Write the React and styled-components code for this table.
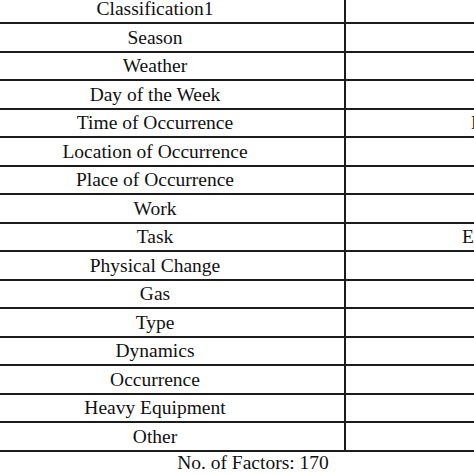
import styled, { createGlobalStyle } from 'styled-components';

const GlobalStyle = createGlobalStyle`
  html, body {
    margin: 0;
    padding: 0;
    background: #fff;
    overflow: hidden;
  }
`;

const rows = [
  { name: 'Classification1', value: '' },
  { name: 'Season', value: '' },
  { name: 'Weather', value: '' },
  { name: 'Day of the Week', value: '' },
  { name: 'Time of Occurrence', value: 'Daytime', indent: 125 },
  { name: 'Location of Occurrence', value: '' },
  { name: 'Place of Occurrence', value: '' },
  { name: 'Work', value: '' },
  { name: 'Task', value: 'Excavation', indent: 116 },
  { name: 'Physical Change', value: '' },
  { name: 'Gas', value: '' },
  { name: 'Type', value: '' },
  { name: 'Dynamics', value: '' },
  { name: 'Occurrence', value: '' },
  { name: 'Heavy Equipment', value: '' },
  { name: 'Other', value: '' },
];

const FactorTable = () => {
  return (
    <>
      <GlobalStyle />
      <Page>
        <Table>
          {rows.map((row) => (
            <Row key={row.name}>
              <NameCell>{row.name}</NameCell>
              <ValueCell $indent={row.indent || 0}>{row.value}</ValueCell>
            </Row>
          ))}
        </Table>
        <Caption>No. of Factors: 170</Caption>
      </Page>
    </>
  );
};

export default FactorTable;

const Page = styled.div`
  width: 574px;
  margin-left: -34px;
  margin-top: -4.2px;
  font-family: 'Liberation Serif', 'Times New Roman', serif;
  font-size: 19.5px;
  color: #111;
`;

const Table = styled.div`
  display: flex;
  flex-direction: column;
`;

const Row = styled.div`
  display: grid;
  grid-template-columns: 378px 196px;
  height: 28.5px;
  box-sizing: border-box;
  border-bottom: 2px solid #1c1c1c;
`;

const NameCell = styled.div`
  display: flex;
  align-items: center;
  justify-content: center;
  white-space: nowrap;
`;

const ValueCell = styled.div`
  display: flex;
  align-items: center;
  border-left: 2px solid #1c1c1c;
  padding-left: ${(p) => p.$indent}px;
  white-space: nowrap;
  overflow: hidden;
`;

const Caption = styled.div`
  text-align: center;
  line-height: 22px;
  padding-top: 0;
`;
